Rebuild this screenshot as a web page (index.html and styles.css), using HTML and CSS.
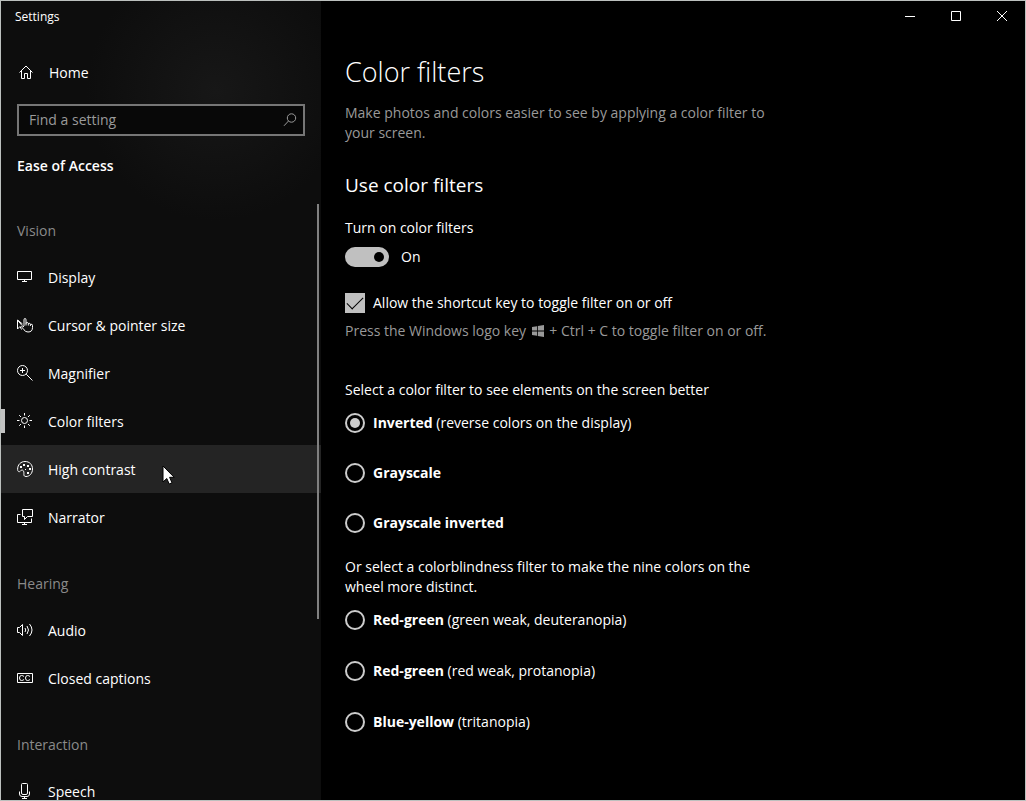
FILE: index.html
```
<!DOCTYPE html>
<html lang="en">
  <head>
    <meta charset="UTF-8" />
    <meta name="viewport" content="width=device-width, initial-scale=1.0" />
    <link rel="stylesheet" href="styles.css">
    <title>Settings</title>
  </head>
  <body>
    <div class="window">
      <aside class="sidebar">
        <div class="app-title">Settings</div>

        <a class="home" href="#">
          <svg class="icon" viewBox="0 0 16 16"><path d="M1.5 8.5 8 2 14.5 8.5M3.500 7V14.500H6.500V9.500H9.500V14.500H12.500V7" /></svg>
          Home
        </a>

        <div class="search">
          <input type="text" id="search" placeholder="Find a setting" aria-label="Find a setting" />
          <svg class="icon search-icon" viewBox="0 0 16 16"><circle cx="9.5" cy="6" r="4.2" /><path d="M6.5 9 2 13.8" /></svg>
        </div>

        <h2 class="category">Ease of Access</h2>

        <nav class="nav">
          <h3>Vision</h3>
          <a class="nav-item" href="#">
            <svg class="icon" viewBox="0 0 16 16"><path d="M.5 2.5H14.5V10.5H.5ZM7.5 10.5V12.5M5 12.5H10" /></svg>
            Display
          </a>
          <a class="nav-item" href="#">
            <svg class="icon" viewBox="0 0 16 16"><path d="M5 8.5 .5 3V12L3 9.5 4.5 12.5M.5 3 5.5 7M7 9V2.8Q7 1.5 8 1.5T9 2.8V6.5M9 6Q11 4.5 11.3 6.5M11.3 6.5Q13.2 5.5 13.4 7.5M13.4 7.5Q15.5 6.5 15.5 8.5V10.5Q15.5 15 11 15Q8.5 15 7 12.8L4.5 9.8Q5 8 7 9.8M9 6V8.5M11.3 6.5V8.5M13.4 7.5V9" /></svg>
            Cursor &amp; pointer size
          </a>
          <a class="nav-item" href="#">
            <svg class="icon" viewBox="0 0 16 16"><circle cx="5.5" cy="5.5" r="5" /><path d="M9.2 9.2 15.5 15.5M3 5.5H8M5.5 3V8" /></svg>
            Magnifier
          </a>
          <a class="nav-item active" href="#">
            <svg class="icon" viewBox="0 0 16 16"><circle cx="7.5" cy="7.5" r="3" /><path d="M7.5 0V2.5M7.5 12.5V15M0 7.5H2.5M12.5 7.5H15M2.2 2.2 4 4M11 11 12.8 12.8M2.2 12.8 4 11M11 4 12.8 2.2" /></svg>
            Color filters
          </a>
          <a class="nav-item hover" href="#">
            <svg class="icon" viewBox="0 0 16 16"><path d="M.6 8.5C.5 3.5 4 .5 8 .5C12.5 .5 15.5 3.5 15.5 8C15.5 12.5 12.5 15.5 9 15.5C6 15.5 7.2 12.8 6.8 11C6.3 8.5 4.5 8.8 3.5 10C2 11.5 .7 10.5 .6 8.5Z" /><path class="fill" d="M3 5h2v2H3zM6 3h2v2H6zM10 4h2v2h-2zM12 7h2v2h-2zM10 11h2v2h-2zM8 8h1v1H8z" /></svg>
            High contrast
            <svg class="pointer" viewBox="0 0 13 20"><path d="M1 1V17L4.8 13.5 7.2 19 10 17.8 7.6 12.3H12.2Z" /></svg>
          </a>
          <a class="nav-item" href="#">
            <svg class="icon" viewBox="0 0 16 16"><path d="M3.5 5.5H.5V13.5H14.5V9.5M7.5 13.5V15.5M5 15.5H10M5.5 .5H15.5V7.5H10.5L7.5 10.5V7.5H5.5Z" /></svg>
            Narrator
          </a>

          <h3>Hearing</h3>
          <a class="nav-item" href="#">
            <svg class="icon" viewBox="0 0 16 16"><path d="M.5 5.5H2.5L5.5 2.5V13.5L2.5 10.5H.5ZM8 6Q9.5 8 8 10M10 4Q13 8 10 12M12.5 2Q17.5 8 12.5 14" /></svg>
            Audio
          </a>
          <a class="nav-item" href="#">
            <svg class="icon" viewBox="0 0 16 16"><path d="M.5 3.5H15.5V12.5H.5ZM7 6.5Q6 5.5 4.5 5.5Q2.5 5.5 2.5 8T4.5 10.5Q6 10.5 7 9.5M13 6.5Q12 5.5 10.5 5.5Q8.5 5.5 8.5 8T10.5 10.5Q12 10.5 13 9.5" /></svg>
            Closed captions
          </a>

          <h3>Interaction</h3>
          <a class="nav-item" href="#">
            <svg class="icon" viewBox="0 0 16 16"><path d="M5.5 .5H9.5Q10.5 .5 10.5 1.5V10Q10.5 11.5 9 11.5H6Q4.5 11.5 4.5 10V1.5Q4.5 .5 5.5 .5ZM2.5 8.5V11Q2.5 13.5 5 13.5H10Q12.5 13.5 12.5 11V8.5M7.5 13.5V15.5M5 15.5H10" /></svg>
            Speech
          </a>
        </nav>
        <div class="scrollbar"></div>
      </aside>

      <main class="main">
        <div class="caption">
          <button aria-label="Minimize"><svg viewBox="0 0 10 10"><path d="M0 5.5H10" /></svg></button>
          <button aria-label="Maximize"><svg viewBox="0 0 10 10"><path d="M.5 .5H9.5V9.5H.5Z" /></svg></button>
          <button aria-label="Close"><svg viewBox="0 0 10 10"><path d="M0 0 10 10M10 0 0 10" /></svg></button>
        </div>

        <form class="content">
          <h1>Color filters</h1>
          <p class="muted intro">Make photos and colors easier to see by applying a color filter to your screen.</p>

          <h2>Use color filters</h2>
          <label for="filters">Turn on color filters</label>
          <div class="row toggle-row">
            <input class="toggle" type="checkbox" id="filters" checked />
            <span>On</span>
          </div>

          <div class="row">
            <input class="check" type="checkbox" id="shortcut" checked />
            <label for="shortcut">Allow the shortcut key to toggle filter on or off</label>
          </div>
          <p class="muted hint">Press the Windows logo key <svg class="winlogo" viewBox="0 0 12 12"><path d="M0 2 5 1.2V5.6H0ZM5.8 1 12 0V5.6H5.8ZM0 6.4H5V10.8L0 10ZM5.8 6.4H12V12L5.8 11Z" /></svg> + Ctrl + C to toggle filter on or off.</p>

          <p>Select a color filter to see elements on the screen better</p>
          <div class="options">
            <div class="row">
              <input type="radio" name="filter" id="inverted" checked />
              <label for="inverted"><b>Inverted</b> (reverse colors on the display)</label>
            </div>
            <div class="row">
              <input type="radio" name="filter" id="grayscale" />
              <label for="grayscale"><b>Grayscale</b></label>
            </div>
            <div class="row">
              <input type="radio" name="filter" id="grayscale-inverted" />
              <label for="grayscale-inverted"><b>Grayscale inverted</b></label>
            </div>
          </div>

          <p>Or select a colorblindness filter to make the nine colors on the wheel more distinct.</p>
          <div class="options colorblind">
            <div class="row">
              <input type="radio" name="filter" id="deuteranopia" />
              <label for="deuteranopia"><b>Red-green</b> (green weak, deuteranopia)</label>
            </div>
            <div class="row">
              <input type="radio" name="filter" id="protanopia" />
              <label for="protanopia"><b>Red-green</b> (red weak, protanopia)</label>
            </div>
            <div class="row">
              <input type="radio" name="filter" id="tritanopia" />
              <label for="tritanopia"><b>Blue-yellow</b> (tritanopia)</label>
            </div>
          </div>
        </form>
      </main>
    </div>
  </body>
</html>
```
FILE: styles.css
```
* {
  box-sizing: border-box;
}

body {
  margin: 0;
  background: #000;
  color: #fff;
  font-family: "Open Sans", "Noto Sans", sans-serif;
  font-size: 14px;
  line-height: 20px;
}

h1, h2, h3, p {
  margin: 0;
  font-weight: 400;
}

a {
  color: inherit;
  text-decoration: none;
}

.window {
  display: grid;
  grid-template-columns: 320px 1fr;
  height: 100vh;
  border: 1px solid #bcc0be;
  overflow: hidden;
}

.icon {
  width: 16px;
  height: 16px;
  flex: none;
  fill: none;
  stroke: #fff;
  overflow: visible;
}

.icon .fill {
  fill: #fff;
  stroke: none;
}

/* Sidebar */
.sidebar {
  position: relative;
  min-height: 0;
  overflow: hidden;
  background: radial-gradient(circle at 215px 90px, #171717, #0d0d0d 130px);
}

.app-title {
  padding: 6px 14px;
  font-size: 12px;
}

.home,
.nav-item {
  position: relative;
  display: flex;
  align-items: center;
  gap: 15px;
  height: 48px;
  padding: 2px 0 0 16px;
}

.home .icon,
.nav-item .icon {
  margin-bottom: 2px;
}

.home {
  margin-top: 15px;
  padding-left: 17px;
}

.search {
  display: flex;
  align-items: center;
  height: 32px;
  margin: 8px 16px 0;
  padding: 0 5px 0 10px;
  border: 2px solid #767676;
  background: #080808;
}

.search input {
  flex: 1;
  min-width: 0;
  padding: 0;
  border: 0;
  outline: 0;
  background: none;
  color: #fff;
  font: inherit;
}

.search input::placeholder {
  color: #9a9a9a;
  opacity: 1;
}

.search-icon {
  stroke: #9a9a9a;
}

.category {
  padding: 20px 16px 12px;
  font-size: 14px;
  font-weight: 600;
}

.nav h3 {
  padding: 33px 16px 12px;
  color: #8a8a8a;
  font-size: 14px;
}

.nav-item.active::before {
  content: "";
  position: absolute;
  left: 0;
  top: 12px;
  width: 4px;
  height: 24px;
  background: #c2c2c2;
}

.nav-item.hover {
  background: #242424;
}

.pointer {
  position: absolute;
  left: 161px;
  top: 20px;
  width: 13px;
  height: 20px;
  fill: #fff;
  stroke: #000;
}

.scrollbar {
  position: absolute;
  top: 203px;
  right: 2px;
  width: 2px;
  height: 415px;
  background: #808080;
}

/* Main pane */
.caption {
  display: flex;
  justify-content: flex-end;
}

.caption button {
  display: flex;
  align-items: center;
  justify-content: center;
  width: 46px;
  height: 30px;
  padding: 0;
  border: 0;
  background: none;
}

.caption svg {
  width: 10px;
  height: 10px;
  fill: none;
  stroke: #fff;
}

.content {
  max-width: 484px;
  padding: 22px 24px;
}

.content h1 {
  font-size: 27px;
  font-weight: 300;
  line-height: 38px;
}

.content h2 {
  margin: 28px 0 19px;
  font-size: 19px;
  line-height: 28px;
}

.muted {
  color: #999;
}

.intro {
  margin-top: 12px;
}

.row {
  display: flex;
  align-items: center;
  gap: 8px;
  height: 20px;
}

.toggle-row {
  gap: 12px;
  margin: 9px 0 26px;
}

.hint {
  margin: 8px 0 39px;
}

.winlogo {
  width: 12px;
  height: 12px;
  margin: 0 2px;
  fill: #999;
  vertical-align: -1px;
}

.content input {
  appearance: none;
  flex: none;
  display: grid;
  place-items: center;
  width: 20px;
  height: 20px;
  margin: 0;
}

.content .toggle {
  width: 44px;
  padding-right: 5px;
  border-radius: 10px;
  background: #c0c0c0;
  justify-items: end;
}

.toggle::before {
  content: "";
  width: 10px;
  height: 10px;
  border-radius: 50%;
  background: #000;
}

.content .check {
  background: #c0c0c0;
}

.check::before {
  content: "";
  width: 15px;
  height: 7px;
  margin-bottom: 5px;
  border-left: 1px solid #000;
  border-bottom: 1px solid #000;
  transform: rotate(-45deg);
}

.content input[type="radio"] {
  border: 2px solid #ccc;
  border-radius: 50%;
}

.content input[type="radio"]:checked::before {
  content: "";
  width: 10px;
  height: 10px;
  border-radius: 50%;
  background: #ccc;
}

.options {
  display: grid;
  gap: 30px;
  margin: 13px 0 24px;
}

.options.colorblind {
  gap: 31px;
}
```
